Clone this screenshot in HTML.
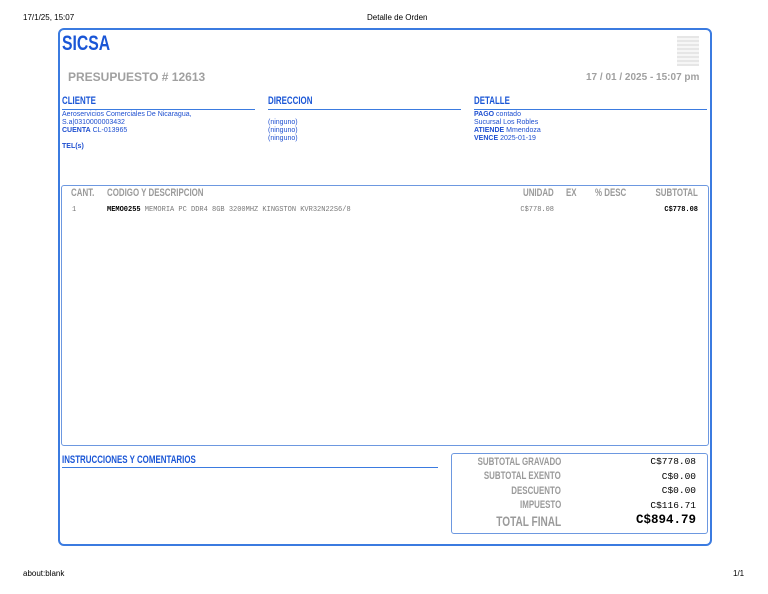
<!DOCTYPE html>
<html><head><style>
body{margin:0;width:768px;height:594px;background:#fff;position:relative;font-family:"Liberation Sans",sans-serif;overflow:hidden}
.a{position:absolute;white-space:nowrap}
.c{font-family:"Liberation Sans Narrow","Liberation Sans",sans-serif;font-weight:bold;transform-origin:left top}
.r{transform-origin:right top}
.s{font-size:7px;color:#1e4fd0;line-height:8px}
.m{font-family:"Liberation Mono",monospace}
.h{font-size:11px;color:#1a56d6;transform:scaleX(.72)}
.g{color:#9a9a9a;font-size:11px}
</style></head><body>
<div class="a" style="left:23px;top:13px;font-size:8px">17/1/25, 15:07</div>
<div class="a" style="left:367px;top:13px;font-size:8px">Detalle de Orden</div>
<div class="a" style="left:23px;top:569px;font-size:8px">about:blank</div>
<div class="a" style="left:733px;top:569px;font-size:8px">1/1</div>

<div class="a" style="left:58px;top:28px;width:650px;height:514px;border:2px solid #3b7be0;border-radius:6px"></div>
<div class="a c" style="left:62px;top:32px;font-size:21px;color:#1a56d6;transform:scaleX(.75)">SICSA</div>
<div class="a" style="left:677px;top:36px;width:22px;height:30px;background:repeating-linear-gradient(180deg,#e6e6e6 0 2px,#f6f6f6 2px 4px)"></div>
<div class="a" style="left:68px;top:70px;font-size:12px;color:#a0a0a0;font-weight:bold">PRESUPUESTO # 12613</div>
<div class="a" style="left:586px;top:72px;font-size:10px;color:#a0a0a0;font-weight:bold">17 / 01 / 2025 - 15:07 pm</div>

<div class="a c h" style="left:62px;top:95px">CLIENTE</div>
<div class="a c h" style="left:268px;top:95px">DIRECCION</div>
<div class="a c h" style="left:474px;top:95px">DETALLE</div>
<div class="a" style="left:62px;top:109px;width:193px;border-top:1px solid #3b7be0"></div>
<div class="a" style="left:268px;top:109px;width:193px;border-top:1px solid #3b7be0"></div>
<div class="a" style="left:474px;top:109px;width:233px;border-top:1px solid #3b7be0"></div>
<div class="a s" style="left:62px;top:111px">Aeroservicios Comerciales De Nicaragua,<br>S.a|0310000003432<br><b>CUENTA</b> CL-013965<br><br><b>TEL(s)</b></div>
<div class="a s" style="left:268px;top:119px">(ninguno)<br>(ninguno)<br>(ninguno)</div>
<div class="a s" style="left:474px;top:111px"><b>PAGO</b> contado<br>Sucursal Los Robles<br><b>ATIENDE</b> Mmendoza<br><b>VENCE</b> 2025-01-19</div>

<div class="a" style="left:61px;top:185px;width:646px;height:259px;border:1px solid #6d98e0;border-radius:3px"></div>
<div class="a c g" style="left:71px;top:187px;transform:scaleX(.72)">CANT.</div>
<div class="a c g" style="left:107px;top:187px;transform:scaleX(.72)">CODIGO Y DESCRIPCION</div>
<div class="a c g r" style="right:214px;top:187px;transform:scaleX(.72)">UNIDAD</div>
<div class="a c g" style="left:566px;top:187px;transform:scaleX(.72)">EX</div>
<div class="a c g" style="left:595px;top:187px;transform:scaleX(.72)">% DESC</div>
<div class="a c g r" style="right:70px;top:187px;transform:scaleX(.72)">SUBTOTAL</div>
<div class="a m" style="left:72px;top:206px;font-size:7px;color:#777">1</div>
<div class="a m" style="left:107px;top:206px;font-size:7px;color:#777"><b style="color:#000">MEMO0255</b> MEMORIA PC DDR4 8GB 3200MHZ KINGSTON KVR32N22S6/8</div>
<div class="a m" style="right:214px;top:206px;font-size:7px;color:#777">C$778.08</div>
<div class="a m" style="right:70px;top:206px;font-size:7px;font-weight:bold">C$778.08</div>

<div class="a c h" style="left:62px;top:454px">INSTRUCCIONES Y COMENTARIOS</div>
<div class="a" style="left:62px;top:467px;width:376px;border-top:1px solid #3b7be0"></div>

<div class="a" style="left:451px;top:453px;width:255px;height:79px;border:1px solid #6d98e0;border-radius:3px"></div>
<div class="a c g r" style="right:207px;top:456px;transform:scaleX(.72)">SUBTOTAL GRAVADO</div>
<div class="a c g r" style="right:207px;top:470px;transform:scaleX(.72)">SUBTOTAL EXENTO</div>
<div class="a c g r" style="right:207px;top:485px;transform:scaleX(.72)">DESCUENTO</div>
<div class="a c g r" style="right:207px;top:499px;transform:scaleX(.72)">IMPUESTO</div>
<div class="a c g r" style="right:207px;top:513px;font-size:14px;transform:scaleX(.72)">TOTAL FINAL</div>
<div class="a m" style="right:72px;top:456px;font-size:9.5px">C$778.08</div>
<div class="a m" style="right:72px;top:471px;font-size:9.5px">C$0.00</div>
<div class="a m" style="right:72px;top:485px;font-size:9.5px">C$0.00</div>
<div class="a m" style="right:72px;top:500px;font-size:9.5px">C$116.71</div>
<div class="a m" style="right:72px;top:513px;font-size:12.5px;font-weight:bold">C$894.79</div>
</body></html>
